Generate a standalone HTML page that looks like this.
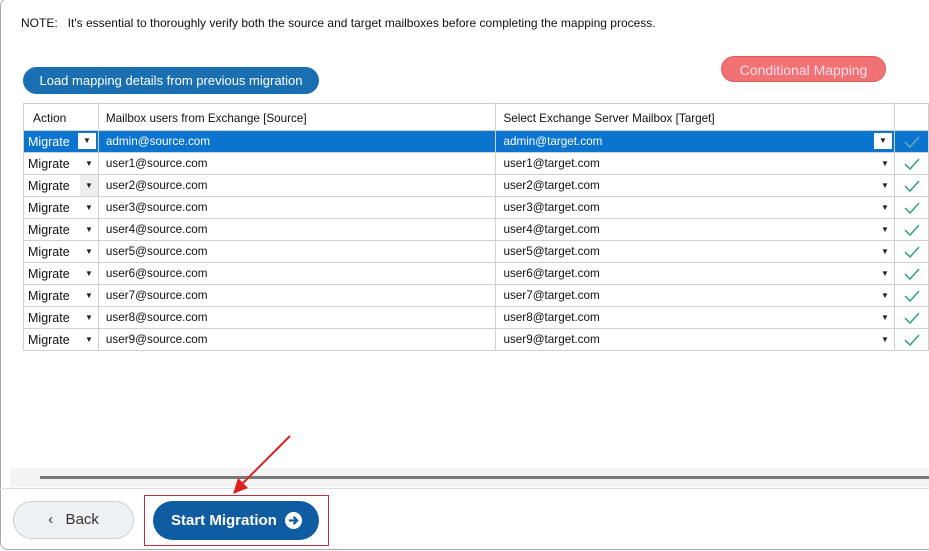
<!DOCTYPE html>
<html><head><meta charset="utf-8"><style>
*{box-sizing:border-box;margin:0;padding:0}
body{width:929px;height:551px;background:#fff;font-family:"Liberation Sans",sans-serif;position:relative;overflow:hidden;color:#111}
.frame{position:absolute;left:0;top:-2px;width:935px;height:552px;border:1px solid #a8a8a8;border-radius:8px}
.note{position:absolute;left:21px;top:16px;font-size:12px;color:#111}
.load{position:absolute;left:23px;top:67px;width:296px;height:27px;border-radius:14px;background:#1a6fb3;color:#fff;font-size:13px;line-height:27px;text-align:center}
.cond{position:absolute;left:721px;top:56px;width:165px;height:26px;border-radius:13px;background:#f07272;color:#fde;font-size:14px;line-height:26px;text-align:center;border:1px solid #e06060}
table{position:absolute;left:23px;top:103px;border-collapse:collapse;font-size:11.7px;table-layout:fixed}
td{border:1px solid #d0d0d0;height:22px;padding:0 0 0 7px;white-space:nowrap;position:relative}
tr.h td{height:27px;border-top:1px solid #ccc;padding-top:2px}
td.a{padding-left:4px;font-size:12.5px}
.dd{position:absolute;right:0;top:0;width:18px;height:100%;font-size:8px;text-align:center;line-height:21px;color:#222}
.ddg{background:#eee}
tr.sel td{background:#0b74cf;color:#fff}
tr.sel .dd{background:#fff;color:#222;top:2px;height:16px;line-height:16px;right:2px}
.ck{padding:0;text-align:center}
.ck svg{display:block;margin:0 auto}
.sb{position:absolute;left:10px;top:468px;width:919px;height:19px;background:#f3f3f3}
.sb div{position:absolute;left:30px;top:8px;width:889px;height:3px;background:#7a7a7a}
.sep{position:absolute;left:0;top:488px;width:929px;height:1px;background:#ddd}
.back{position:absolute;left:13px;top:501px;width:121px;height:38px;border-radius:19px;background:#eef2f5;border:1px solid #c9cfd4;font-size:15px;color:#333;line-height:36px;text-align:center}
.redbox{position:absolute;left:144px;top:495px;width:185px;height:51px;border:1px solid #c0303a}
.start{position:absolute;left:153px;top:501px;width:166px;height:39px;border-radius:20px;background:#0f5da0;color:#fff;font-size:15px;font-weight:bold;line-height:39px;padding-left:18px}
.start svg{position:absolute;right:17px;top:11px;display:block}
</style></head><body>
<div class="frame"></div>
<div class="note">NOTE:&nbsp;&nbsp; It's essential to thoroughly verify both the source and target mailboxes before completing the mapping process.</div>
<div class="load">Load mapping details from previous migration</div>
<div class="cond">Conditional Mapping</div>
<table>
<colgroup><col style="width:75px"><col style="width:398px"><col style="width:399px"><col style="width:34px"></colgroup>
<tr class="h"><td style="padding-left:9px;font-size:12px">Action</td><td>Mailbox users from Exchange [Source]</td><td>Select Exchange Server Mailbox [Target]</td><td></td></tr>
<tr class="sel"><td class="a">Migrate<span class="dd">▼</span></td><td>admin@source.com</td><td>admin@target.com<span class="dd">▼</span></td><td class="ck"><svg width="16" height="12"><path d="M1 6l5 5 9-10" stroke="#5fb0b8" stroke-width="1.5" fill="none"/></svg></td></tr>
<tr><td class="a">Migrate<span class="dd">▼</span></td><td>user1@source.com</td><td>user1@target.com<span class="dd">▼</span></td><td class="ck"><svg width="16" height="12"><path d="M1 6l5 5 9-10" stroke="#2ea37a" stroke-width="1.5" fill="none"/></svg></td></tr>
<tr><td class="a">Migrate<span class="dd ddg">▼</span></td><td>user2@source.com</td><td>user2@target.com<span class="dd">▼</span></td><td class="ck"><svg width="16" height="12"><path d="M1 6l5 5 9-10" stroke="#2ea37a" stroke-width="1.5" fill="none"/></svg></td></tr>
<tr><td class="a">Migrate<span class="dd">▼</span></td><td>user3@source.com</td><td>user3@target.com<span class="dd">▼</span></td><td class="ck"><svg width="16" height="12"><path d="M1 6l5 5 9-10" stroke="#2ea37a" stroke-width="1.5" fill="none"/></svg></td></tr>
<tr><td class="a">Migrate<span class="dd">▼</span></td><td>user4@source.com</td><td>user4@target.com<span class="dd">▼</span></td><td class="ck"><svg width="16" height="12"><path d="M1 6l5 5 9-10" stroke="#2ea37a" stroke-width="1.5" fill="none"/></svg></td></tr>
<tr><td class="a">Migrate<span class="dd">▼</span></td><td>user5@source.com</td><td>user5@target.com<span class="dd">▼</span></td><td class="ck"><svg width="16" height="12"><path d="M1 6l5 5 9-10" stroke="#2ea37a" stroke-width="1.5" fill="none"/></svg></td></tr>
<tr><td class="a">Migrate<span class="dd">▼</span></td><td>user6@source.com</td><td>user6@target.com<span class="dd">▼</span></td><td class="ck"><svg width="16" height="12"><path d="M1 6l5 5 9-10" stroke="#2ea37a" stroke-width="1.5" fill="none"/></svg></td></tr>
<tr><td class="a">Migrate<span class="dd">▼</span></td><td>user7@source.com</td><td>user7@target.com<span class="dd">▼</span></td><td class="ck"><svg width="16" height="12"><path d="M1 6l5 5 9-10" stroke="#2ea37a" stroke-width="1.5" fill="none"/></svg></td></tr>
<tr><td class="a">Migrate<span class="dd">▼</span></td><td>user8@source.com</td><td>user8@target.com<span class="dd">▼</span></td><td class="ck"><svg width="16" height="12"><path d="M1 6l5 5 9-10" stroke="#2ea37a" stroke-width="1.5" fill="none"/></svg></td></tr>
<tr><td class="a">Migrate<span class="dd">▼</span></td><td>user9@source.com</td><td>user9@target.com<span class="dd">▼</span></td><td class="ck"><svg width="16" height="12"><path d="M1 6l5 5 9-10" stroke="#2ea37a" stroke-width="1.5" fill="none"/></svg></td></tr>
</table>
<div class="sb"><div></div></div>
<div class="sep"></div>
<div class="back">‹&nbsp;&nbsp; Back</div>
<div class="redbox"></div>
<div class="start">Start Migration<svg width="17" height="17" viewBox="0 0 17 17"><circle cx="8.5" cy="8.5" r="8.5" fill="#fff"/><path d="M4 8.5h8M8.5 4.8l3.7 3.7-3.7 3.7" stroke="#0f5da0" stroke-width="2.2" fill="none"/></svg></div>
<svg style="position:absolute;left:0;top:0" width="929" height="551"><line x1="290" y1="436" x2="243" y2="483" stroke="#e02020" stroke-width="2"/><path d="M233 494l5-16 10 10z" fill="#e02020"/></svg>
</body></html>
